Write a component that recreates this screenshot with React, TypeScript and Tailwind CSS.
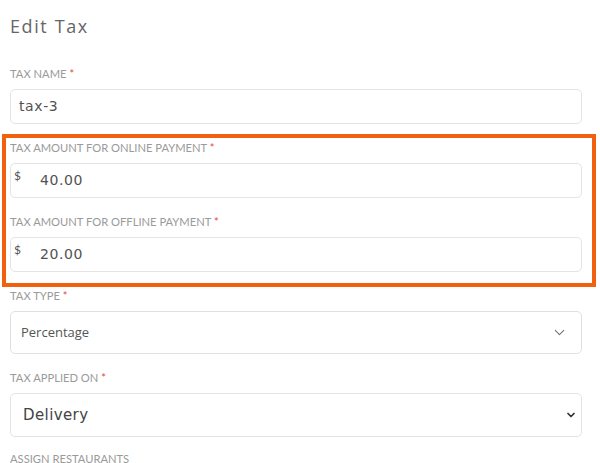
import { ChevronDown } from 'lucide-react';

const labelCls =
  'block h-[14px] leading-[14px] mb-2 text-[11.2px] uppercase text-[#9a9a9a] font-["Lato",sans-serif]';

function Label({ text }: { text: string }) {
  return (
    <label className={labelCls}>
      {text} <span className="text-[#e8453c]">*</span>
    </label>
  );
}

function MoneyInput({ value }: { value: string }) {
  return (
    <div className="h-[35px] w-full rounded-[5px] border border-[#e4e4e4] bg-white flex items-center relative">
      <span className="absolute left-[3px] top-[6px] text-[12px] leading-none text-[#555] font-['Lato',sans-serif]">
        $
      </span>
      <span className="pl-[29px] text-[14px] tracking-[0.6px] text-[#525252] font-['DejaVu_Sans',sans-serif]">
        {value}
      </span>
    </div>
  );
}

export default function App() {
  return (
    <div className="relative w-[600px] h-[463px] overflow-hidden bg-white">
      <div className="px-[10px] w-[592px]">
        <h1 className="pt-[14px] text-[18px] leading-[24px] tracking-[1.6px] text-[#666] font-['Open_Sans',sans-serif]">
          Edit Tax
        </h1>

        <div className="mt-[29px]">
          <Label text="Tax Name" />
          <div className="h-[35px] w-full rounded-[5px] border border-[#e4e4e4] bg-white flex items-center">
            <span className="pl-[8px] text-[14px] tracking-[0.6px] text-[#525252] font-['DejaVu_Sans',sans-serif]">
              tax-3
            </span>
          </div>
        </div>

        <div className="mt-[17px]">
          <Label text="Tax Amount for Online Payment" />
          <MoneyInput value="40.00" />
        </div>

        <div className="mt-[17px]">
          <Label text="Tax Amount for Offline Payment" />
          <MoneyInput value="20.00" />
        </div>

        <div className="mt-[17px]">
          <Label text="Tax Type" />
          <div className="h-[43px] w-full rounded-[5px] border border-[#dde1e6] bg-white flex items-center justify-between px-[10px]">
            <span className="text-[13px] text-[#555] font-['Open_Sans',sans-serif]">Percentage</span>
            <ChevronDown size={17} strokeWidth={1.5} className="text-[#6b7280] mr-[3px]" />
          </div>
        </div>

        <div className="mt-[17px]">
          <Label text="Tax Applied On" />
          <div className="h-[44px] w-full rounded-[5px] border border-[#e4e4e4] bg-white flex items-center justify-between pl-[12px] pr-[4px]">
            <span className="text-[15px] tracking-[0.4px] text-[#444] font-['DejaVu_Sans',sans-serif]">Delivery</span>
            <ChevronDown size={12} strokeWidth={3.5} className="text-[#333]" />
          </div>
        </div>

        <div className="mt-[15px]">
          <label className={labelCls}>Assign Restaurants</label>
        </div>
      </div>

      <div className="absolute left-[2px] top-[134px] w-[594px] h-[153px] border-[4px] border-[#f0600f] pointer-events-none" />
    </div>
  );
}
